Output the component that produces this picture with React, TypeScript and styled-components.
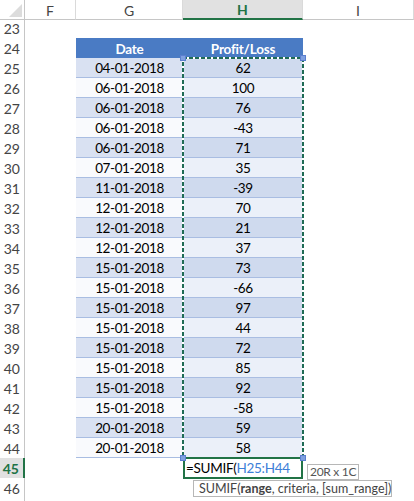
import styled, { createGlobalStyle } from "styled-components";

const GlobalStyle = createGlobalStyle`
  html, body {
    margin: 0;
    padding: 0;
    background: #fff;
    overflow: hidden;
  }
  body {
    font-family: Lato, "Liberation Sans", sans-serif;
  }
`;

const COLS = "25px 51px 107px 120px 1fr";
const GREEN = "#217346";

const Sheet = styled.div`
  position: relative;
  width: 414px;
  height: 501px;
  overflow: hidden;
  display: flex;
  flex-direction: column;
  background: #fff;
`;

const HeaderRow = styled.div`
  display: grid;
  grid-template-columns: ${COLS};
  height: 18px;
  flex: none;
`;

const Row = styled.div`
  display: grid;
  grid-template-columns: ${COLS};
  height: 20px;
  flex: none;
`;

const Corner = styled.div`
  position: relative;
  box-sizing: border-box;
  border-right: 1px solid #c6c6c6;
  border-bottom: 1px solid #c6c6c6;
  &::after {
    content: "";
    position: absolute;
    right: 2px;
    bottom: 2px;
    width: 0;
    height: 0;
    border-left: 13px solid transparent;
    border-bottom: 13px solid #dcdcdc;
  }
`;

const ColHead = styled.div<{ $active?: boolean }>`
  box-sizing: border-box;
  display: flex;
  align-items: center;
  justify-content: center;
  font-size: 14px;
  padding-top: 1px;
  color: ${({ $active }) => ($active ? GREEN : "#444")};
  font-weight: ${({ $active }) => ($active ? 700 : 400)};
  background: ${({ $active }) => ($active ? "#e1e1e1" : "#fff")};
  border-right: 1px solid #dadada;
  border-bottom: ${({ $active }) =>
    $active ? `2px solid ${GREEN}` : "1px solid #c6c6c6"};
`;

const RowHead = styled.div<{ $active?: boolean }>`
  box-sizing: border-box;
  display: flex;
  align-items: center;
  justify-content: flex-end;
  padding-right: 4px;
  padding-top: 1px;
  font-size: 14px;
  color: ${({ $active }) => ($active ? GREEN : "#444")};
  font-weight: ${({ $active }) => ($active ? 700 : 400)};
  background: ${({ $active }) => ($active ? "#e1e1e1" : "#fff")};
  border-right: ${({ $active }) =>
    $active ? `2px solid ${GREEN}` : "1px solid #c6c6c6"};
`;

const Blank = styled.div``;

const TableHead = styled.div`
  display: flex;
  align-items: center;
  justify-content: center;
  background: #4a7bc4;
  color: #fff;
  font-weight: 700;
  font-size: 13.5px;
  letter-spacing: -0.2px;
  padding-top: 1px;
`;

const DataCell = styled.div<{ $band: boolean; $sel?: boolean }>`
  box-sizing: border-box;
  display: flex;
  align-items: center;
  justify-content: center;
  font-size: 13.5px;
  letter-spacing: -0.4px;
  padding-top: 1px;
  color: #000;
  border-bottom: 1px solid #a9bde2;
  background: ${({ $band, $sel }) =>
    $sel ? ($band ? "#cfdaee" : "#ebf0f9") : $band ? "#d9e1f2" : "#f9fafd"};
`;

const FormulaCell = styled.div`
  position: relative;
  z-index: 2;
  box-sizing: border-box;
  margin: -1px 0 -1px 0;
  border: 2px solid ${GREEN};
  background: #fff;
  display: flex;
  align-items: center;
  padding-left: 1px;
  font-size: 13.5px;
  letter-spacing: -0.3px;
  color: #000;
  white-space: nowrap;
`;

const Ref = styled.span`
  color: #3d7fd8;
`;

const Marquee = styled.svg`
  position: absolute;
  left: 182px;
  top: 57px;
  width: 122px;
  height: 402px;
  z-index: 1;
  pointer-events: none;
`;

const Handle = styled.div<{ $x: number; $y: number }>`
  position: absolute;
  left: ${({ $x }) => $x - 3}px;
  top: ${({ $y }) => $y - 3}px;
  width: 6px;
  height: 6px;
  box-sizing: border-box;
  background: #7fa0e0;
  border: 1px solid #5b7fcf;
  z-index: 3;
`;

const SizeTip = styled.div`
  position: absolute;
  left: 307px;
  top: 464px;
  height: 16px;
  box-sizing: border-box;
  border: 1px solid #b7b7b7;
  background: #fff;
  color: #555;
  font-size: 12px;
  letter-spacing: -0.3px;
  line-height: 14px;
  padding: 0 2px;
  white-space: nowrap;
  z-index: 3;
`;

const FuncTip = styled.div`
  position: absolute;
  left: 193px;
  top: 480px;
  width: 199px;
  height: 17px;
  box-sizing: border-box;
  border: 1px solid #b7b7b7;
  background: #fff;
  color: #444;
  font-size: 12.5px;
  line-height: 15px;
  padding-left: 5px;
  white-space: nowrap;
  z-index: 4;
  b {
    font-weight: 700;
  }
`;

const data: [string, number][] = [
  ["04-01-2018", 62],
  ["06-01-2018", 100],
  ["06-01-2018", 76],
  ["06-01-2018", -43],
  ["06-01-2018", 71],
  ["07-01-2018", 35],
  ["11-01-2018", -39],
  ["12-01-2018", 70],
  ["12-01-2018", 21],
  ["12-01-2018", 37],
  ["15-01-2018", 73],
  ["15-01-2018", -66],
  ["15-01-2018", 97],
  ["15-01-2018", 44],
  ["15-01-2018", 72],
  ["15-01-2018", 85],
  ["15-01-2018", 92],
  ["15-01-2018", -58],
  ["20-01-2018", 59],
  ["20-01-2018", 58],
];

const App = () => {
  return (
    <>
      <GlobalStyle />
      <Sheet>
        <HeaderRow>
          <Corner />
          <ColHead>F</ColHead>
          <ColHead>G</ColHead>
          <ColHead $active>H</ColHead>
          <ColHead>I</ColHead>
        </HeaderRow>

        <Row>
          <RowHead>23</RowHead>
          <Blank />
          <Blank />
          <Blank />
          <Blank />
        </Row>

        <Row>
          <RowHead>24</RowHead>
          <Blank />
          <TableHead>Date</TableHead>
          <TableHead>Profit/Loss</TableHead>
          <Blank />
        </Row>

        {data.map(([date, value], i) => (
          <Row key={i}>
            <RowHead>{25 + i}</RowHead>
            <Blank />
            <DataCell $band={i % 2 === 0}>{date}</DataCell>
            <DataCell $band={i % 2 === 0} $sel>
              {value}
            </DataCell>
            <Blank />
          </Row>
        ))}

        <Row>
          <RowHead $active>45</RowHead>
          <Blank />
          <Blank />
          <FormulaCell>
            =SUMIF(<Ref>H25:H44</Ref>
          </FormulaCell>
          <Blank />
        </Row>

        <Row>
          <RowHead>46</RowHead>
          <Blank />
          <Blank />
          <Blank />
          <Blank />
        </Row>
        <Row>
          <RowHead />
          <Blank />
          <Blank />
          <Blank />
          <Blank />
        </Row>

        <Marquee viewBox="0 0 122 402">
          <rect x="1" y="1" width="120" height="400" fill="none" stroke="#fff" strokeWidth="2" />
          <rect
            x="1"
            y="1"
            width="120"
            height="400"
            fill="none"
            stroke="#1f6b55"
            strokeWidth="2"
            strokeDasharray="4 2"
          />
        </Marquee>
        <Handle $x={183} $y={58} />
        <Handle $x={303} $y={58} />
        <Handle $x={183} $y={458} />
        <Handle $x={303} $y={458} />

        <SizeTip>20R x 1C</SizeTip>
        <FuncTip>
          SUMIF(<b>range</b>, criteria, [sum_range])
        </FuncTip>
      </Sheet>
    </>
  );
};

export default App;
